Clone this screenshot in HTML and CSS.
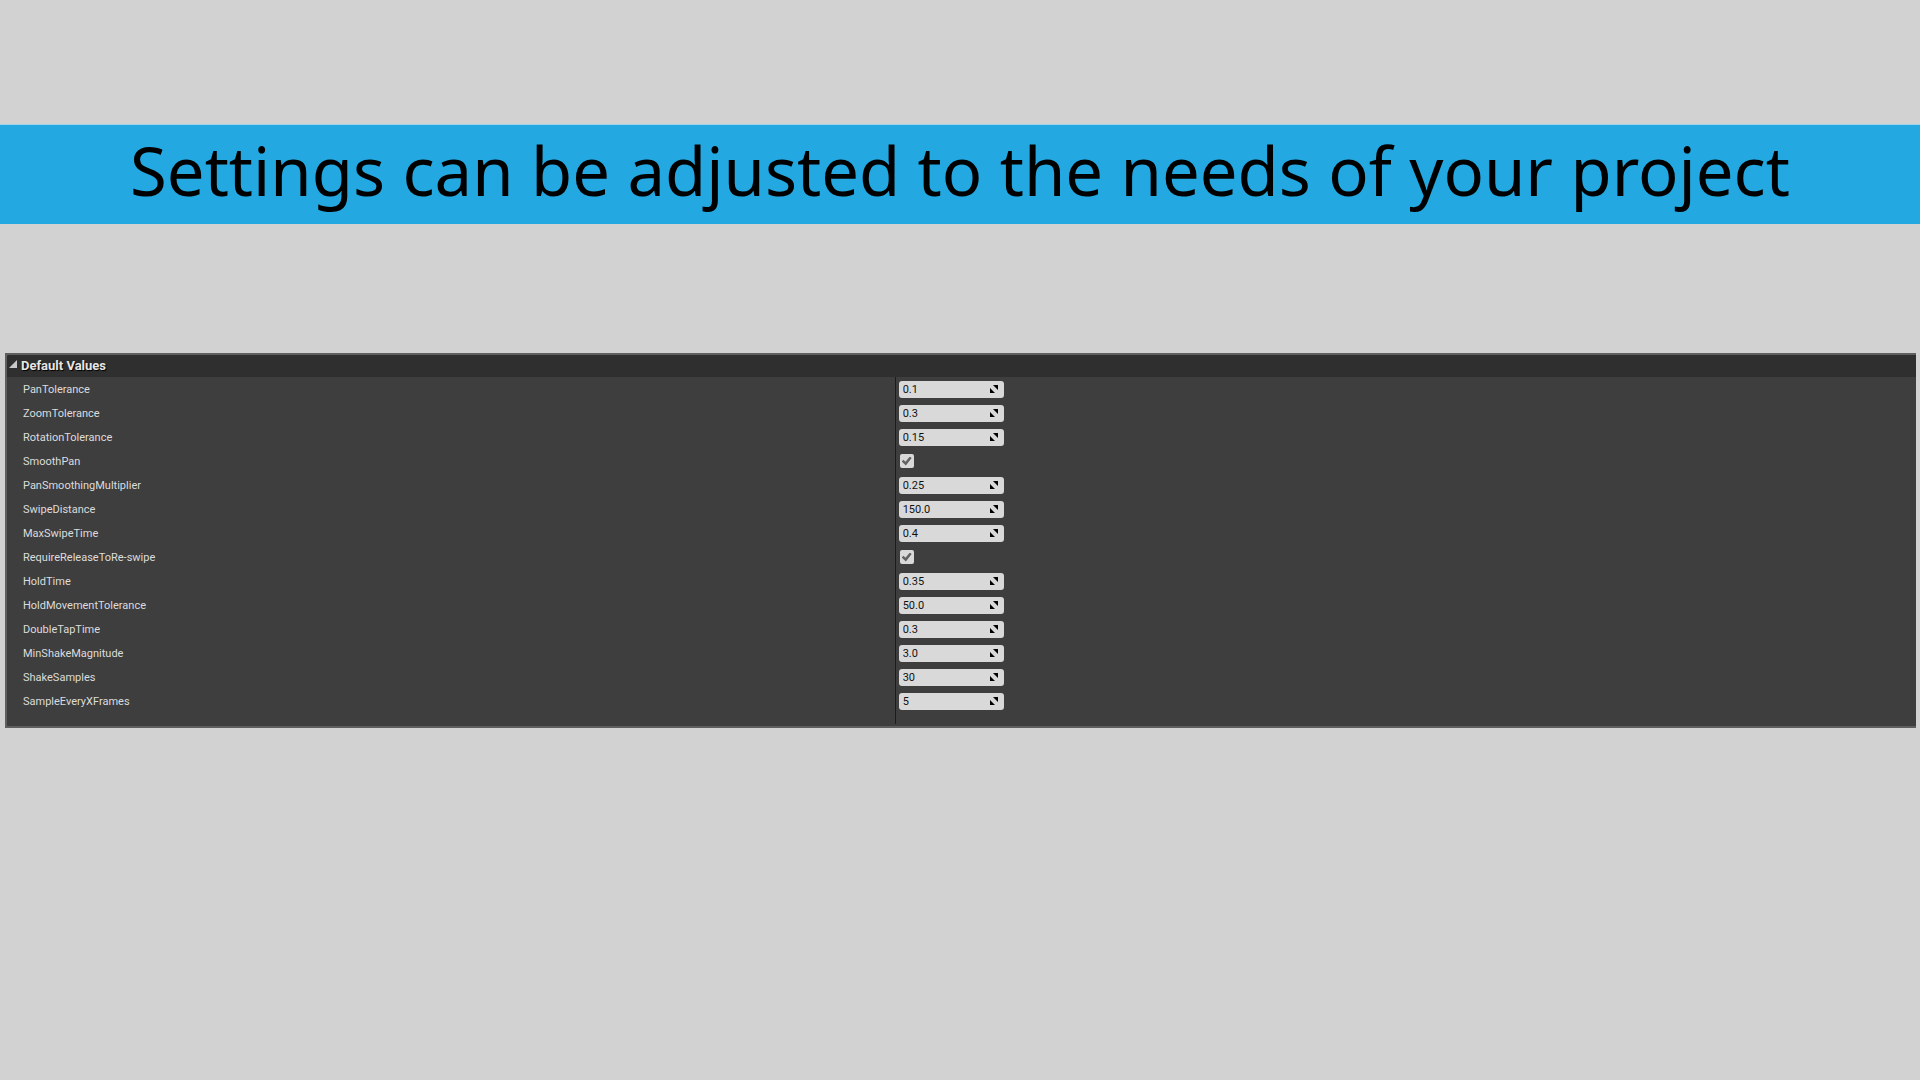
FILE: index.html
```html
<!DOCTYPE html>
<html lang="en">
    <head>
        <meta charset="UTF-8">
        <meta name="viewport" content="width=device-width, initial-scale=1.0">
        <title>Settings</title>
        <link rel="stylesheet" href="styles.css">
    </head>

    <body>
        <h1 class="banner">Settings can be adjusted to the needs of your project</h1>

        <details class="panel" open>
            <summary class="panel-header">
                <svg class="arrow" viewBox="0 0 8 8"><path d="M8 0v8H0z"/></svg>
                <span>Default Values</span>
            </summary>
            <div class="rows" id="rows"></div>
        </details>

        <script src="script.js"></script>
    </body>
</html>
```
FILE: styles.css
```css
body {
    font-family: Roboto, Arial, sans-serif;
    margin: 0;
    background-color: #d2d2d2;
}
.banner {
    margin: 124px 0 0;
    padding-bottom: 8px;
    border-top: 1px solid #9fd3ea;
    background-color: #23a8e1;
    color: #000;
    font-family: "Noto Sans", "Open Sans", sans-serif;
    font-size: 67px;
    font-weight: 400;
    line-height: 91px;
    text-align: center;
}
.panel {
    margin: 129px 4px 0 5px;
    border: 2px solid #5f5f5f;
    border-right: 0;
    background-color: #3e3e3e;
    color: #dcdcdc;
    font-size: 11px;
}
.panel-header {
    display: flex;
    align-items: center;
    gap: 4px;
    height: 20px;
    padding: 0 0 2px 2px;
    background-color: #2f2f2f;
    border-radius: 3px 0 0 0;
    color: #e6e6e6;
    font-size: 13px;
    font-weight: 700;
    text-shadow: 1px 1px 1px #000;
    cursor: pointer;
}
.arrow {
    width: 8px;
    height: 8px;
    margin-bottom: 2px;
    fill: #c8c8c8;
}
.rows {
    padding-bottom: 2px;
}
.row {
    display: grid;
    grid-template-columns: 27fr 31fr;
    align-items: center;
}
.row label,
.divider-end {
    padding: 1px 0 0 16px;
    border-right: 1px solid #1c1c1c;
    line-height: 23px;
}
.divider-end {
    height: 10px;
}
.field {
    display: flex;
    align-items: center;
    width: 105px;
    height: 17px;
    margin-left: 3px;
    border-radius: 3px;
    background-color: #d9d9d9;
}
.field input {
    flex: 1;
    min-width: 0;
    height: 17px;
    padding: 0 0 0 4px;
    border: 0;
    background: none;
    color: #111;
    font-family: inherit;
    font-size: 11px;
    outline: none;
}
.spin {
    width: 8px;
    height: 8px;
    margin-right: 6px;
}
.check {
    appearance: none;
    display: grid;
    place-items: center;
    width: 14px;
    height: 14px;
    margin: 0 0 0 4px;
    border-radius: 2px;
    background-color: #d9d9d9;
}
.check:checked::before {
    content: "";
    width: 10px;
    height: 9px;
    background-color: #626262;
    clip-path: polygon(0 55%, 18% 36%, 38% 58%, 82% 0, 100% 16%, 42% 100%);
}
```
FILE: script.js
```javascript
const settings = [
    ["PanTolerance", "0.1"],
    ["ZoomTolerance", "0.3"],
    ["RotationTolerance", "0.15"],
    ["SmoothPan", true],
    ["PanSmoothingMultiplier", "0.25"],
    ["SwipeDistance", "150.0"],
    ["MaxSwipeTime", "0.4"],
    ["RequireReleaseToRe-swipe", true],
    ["HoldTime", "0.35"],
    ["HoldMovementTolerance", "50.0"],
    ["DoubleTapTime", "0.3"],
    ["MinShakeMagnitude", "3.0"],
    ["ShakeSamples", "30"],
    ["SampleEveryXFrames", "5"]
];

document.getElementById("rows").innerHTML = settings.map(([name, value]) => `
    <div class="row">
        <label for="${name}">${name}</label>
        ${value === true
            ? `<input class="check" type="checkbox" id="${name}" checked>`
            : `<div class="field">
                <input type="text" id="${name}" value="${value}">
                <svg class="spin" viewBox="0 0 8 8"><path d="M3 0h5v5zM0 3v5h5z"/></svg>
            </div>`}
    </div>
`).join("") + `<div class="row"><div class="divider-end"></div></div>`;
```
